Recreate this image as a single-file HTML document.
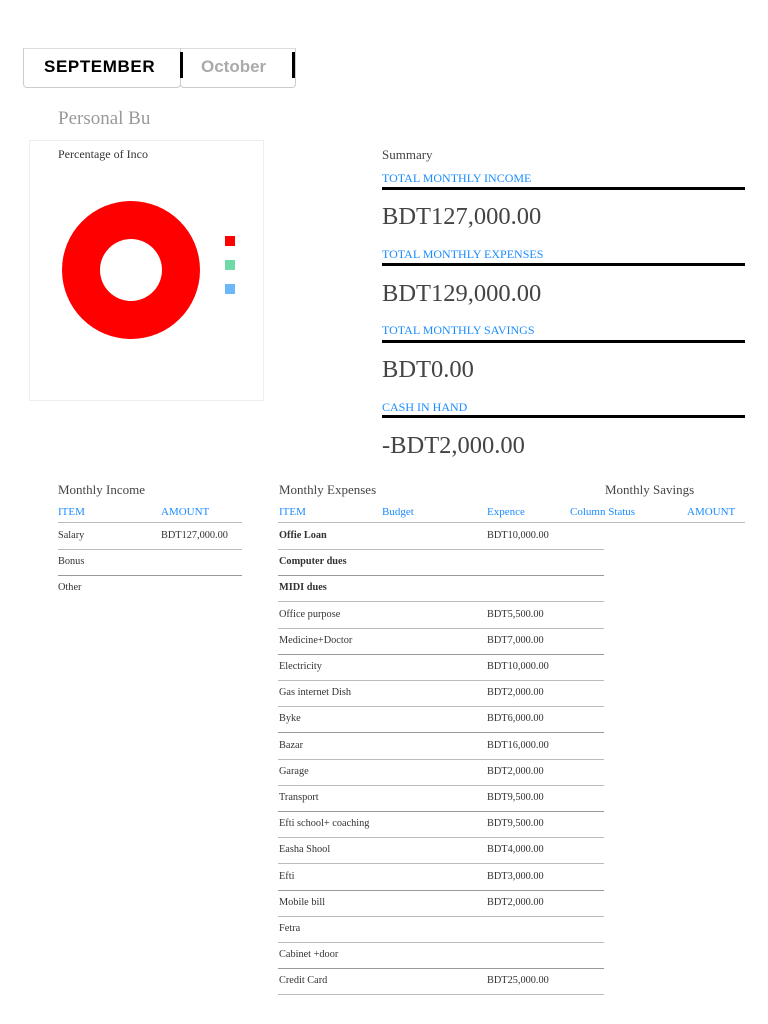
<!DOCTYPE html>
<html><head><style>
body{margin:0;width:768px;height:1024px;background:#fff;position:relative;font-family:"Liberation Serif",serif;overflow:hidden}
.a{position:absolute;white-space:nowrap}
.s{font-size:10.3px;color:#333}
.b{font-weight:bold}
.bl{color:#1a8cff;font-size:11px}
.ln{position:absolute;height:1px;background:#bbb}
.big{font-size:24.5px;color:#444}
.thick{position:absolute;left:382px;width:363px;height:3px;background:#000}
</style></head><body>
<div class="a" style="left:23px;top:48px;width:156px;height:38px;border:1px solid #ccc;border-top-color:#ddd;border-radius:0 0 4px 4px"></div>
<div class="a" style="left:180px;top:48px;width:114px;height:38px;border:1px solid #ccc;border-top-color:#ddd;border-radius:0 0 4px 4px"></div>
<div class="a" style="left:180px;top:52px;width:3px;height:26px;background:#000"></div>
<div class="a" style="left:292px;top:52px;width:3px;height:26px;background:#000"></div>
<div class="a b" style="left:44px;top:57px;font-family:'Liberation Sans',sans-serif;font-size:17px;letter-spacing:0.6px;color:#000">SEPTEMBER</div>
<div class="a b" style="left:201px;top:57px;font-family:'Liberation Sans',sans-serif;font-size:17px;color:#aaa">October</div>
<div class="a" style="left:58px;top:108px;font-size:19px;color:#999">Personal Bu</div>
<div class="a" style="left:29px;top:140px;width:233px;height:259px;border:1px solid #eee"></div>
<div class="a" style="left:58px;top:147px;font-size:12px;color:#333">Percentage of Inco</div>
<div class="a" style="left:62px;top:201px;width:138px;height:138px;border-radius:50%;background:#f00"></div>
<div class="a" style="left:100px;top:239px;width:62px;height:62px;border-radius:50%;background:#fff"></div>
<div class="a" style="left:225px;top:236px;width:10px;height:10px;background:#f00"></div>
<div class="a" style="left:225px;top:260px;width:10px;height:10px;background:#6fd9a8"></div>
<div class="a" style="left:225px;top:284px;width:10px;height:10px;background:#6ab8f7"></div>

<div class="a" style="left:382px;top:147px;font-size:13px;color:#444">Summary</div>
<div class="a bl" style="left:382px;top:171px;font-size:12px">TOTAL MONTHLY INCOME</div>
<div class="thick" style="top:187px"></div>
<div class="a big" style="left:382px;top:203px">BDT127,000.00</div>
<div class="a bl" style="left:382px;top:247px;font-size:12px">TOTAL MONTHLY EXPENSES</div>
<div class="thick" style="top:263px"></div>
<div class="a big" style="left:382px;top:280px">BDT129,000.00</div>
<div class="a bl" style="left:382px;top:323px;font-size:12px">TOTAL MONTHLY SAVINGS</div>
<div class="thick" style="top:340px"></div>
<div class="a big" style="left:382px;top:356px">BDT0.00</div>
<div class="a bl" style="left:382px;top:400px;font-size:12px">CASH IN HAND</div>
<div class="thick" style="top:415px"></div>
<div class="a big" style="left:382px;top:432px">-BDT2,000.00</div>

<div class="a" style="left:58px;top:482px;font-size:13px;color:#444">Monthly Income</div>
<div class="a" style="left:279px;top:482px;font-size:13px;color:#444">Monthly Expenses</div>
<div class="a" style="left:605px;top:482px;font-size:13px;color:#444">Monthly Savings</div>
<div class="a bl" style="left:58px;top:506px">ITEM</div>
<div class="a bl" style="left:161px;top:506px">AMOUNT</div>
<div class="a bl" style="left:279px;top:506px">ITEM</div>
<div class="a bl" style="left:382px;top:506px">Budget</div>
<div class="a bl" style="left:487px;top:506px">Expence</div>
<div class="a bl" style="left:570px;top:506px">Column Status</div>
<div class="a bl" style="left:687px;top:506px">AMOUNT</div>
<div class="ln" style="left:58px;top:522px;width:184px"></div>
<div class="ln" style="left:278px;top:522px;width:467px"></div>

<div class="a s" style="left:58px;top:530px">Salary</div><div class="a s" style="left:161px;top:530px">BDT127,000.00</div>
<div class="ln" style="left:58px;top:549px;width:184px"></div>
<div class="a s" style="left:58px;top:556px">Bonus</div>
<div class="ln" style="left:58px;top:575px;width:184px;background:#999"></div>
<div class="a s" style="left:58px;top:582px">Other</div>

<div id="ex"></div>
<script>
var r=[["Offie Loan","BDT10,000.00",1],["Computer dues","",1],["MIDI dues","",1],["Office purpose","BDT5,500.00"],["Medicine+Doctor","BDT7,000.00"],["Electricity","BDT10,000.00"],["Gas internet Dish","BDT2,000.00"],["Byke","BDT6,000.00"],["Bazar","BDT16,000.00"],["Garage","BDT2,000.00"],["Transport","BDT9,500.00"],["Efti school+ coaching","BDT9,500.00"],["Easha Shool","BDT4,000.00"],["Efti","BDT3,000.00"],["Mobile bill","BDT2,000.00"],["Fetra",""],["Cabinet +door",""],["Credit Card","BDT25,000.00"]];
var h="";
r.forEach(function(x,i){var y=530+i*26.2;
h+='<div class="a s'+(x[2]?' b':'')+'" style="left:279px;top:'+y+'px">'+x[0]+'</div>';
if(x[1])h+='<div class="a s" style="left:487px;top:'+y+'px">'+x[1]+'</div>';
h+='<div class="ln" style="left:278px;top:'+(y+19)+'px;width:326px;'+(i%3==1?'background:#999':'')+'"></div>';});
document.getElementById("ex").innerHTML=h;
</script>
</body></html>
